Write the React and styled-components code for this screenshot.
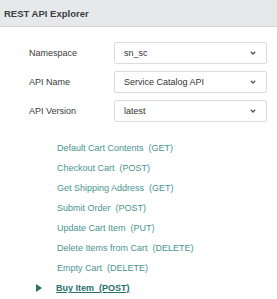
import React from 'react';
import styled, { createGlobalStyle } from 'styled-components';

const GlobalStyle = createGlobalStyle`
  html, body {
    margin: 0;
    padding: 0;
    background: #ffffff;
  }
  body {
    font-family: "Liberation Sans", Arial, sans-serif;
    font-size: 9px;
    color: #333333;
  }
`;

const Panel = styled.div`
  width: 277px;
  height: 299px;
  background: #ffffff;
  overflow: hidden;
`;

const Header = styled.div`
  height: 26px;
  display: flex;
  align-items: center;
  padding-left: 4px;
  background: #e6e8ea;
  border-bottom: 1px solid #d3d5d8;
  font-size: 9.5px;
  font-weight: bold;
  color: #3a3f44;
`;

const Form = styled.div`
  display: flex;
  flex-direction: column;
  gap: 7px;
  padding: 15px 10px 0 29px;
`;

const FormRow = styled.div`
  display: flex;
  align-items: center;
`;

const Label = styled.label`
  width: 85px;
  font-size: 9px;
  color: #3a3a3a;
`;

const SelectBox = styled.div`
  flex: 1;
  height: 20px;
  display: flex;
  align-items: center;
  justify-content: space-between;
  padding: 0 10px 0 9px;
  border: 1px solid #dcdcdc;
  border-radius: 2px;
  font-size: 9px;
  color: #333333;
`;

const Chevron = () => (
  <svg width="6" height="4" viewBox="0 0 6 4">
    <path d="M0.8 0.8 L3 3 L5.2 0.8" fill="none" stroke="#555" strokeWidth="1.3" />
  </svg>
);

const List = styled.ul`
  list-style: none;
  margin: 0;
  padding: 16px 0 0 0;
  display: flex;
  flex-direction: column;
`;

const Item = styled.li`
  height: 20px;
  display: flex;
  align-items: center;
  padding-left: ${p => (p.active ? 36 : 57)}px;
  gap: 14px;
`;

const ItemLink = styled.a`
  font-size: 9px;
  color: ${p => (p.active ? '#2a6e6a' : '#4a948f')};
  font-weight: ${p => (p.active ? 'bold' : 'normal')};
  text-decoration: ${p => (p.active ? 'underline' : 'none')};
  white-space: pre;
  cursor: pointer;
`;

const Arrow = styled.span`
  width: 0;
  height: 0;
  border-top: 4px solid transparent;
  border-bottom: 4px solid transparent;
  border-left: 6px solid #2a6e6a;
`;

const fields = [
  { label: 'Namespace', value: 'sn_sc' },
  { label: 'API Name', value: 'Service Catalog API' },
  { label: 'API Version', value: 'latest' },
];

const endpoints = [
  'Default Cart Contents  (GET)',
  'Checkout Cart  (POST)',
  'Get Shipping Address  (GET)',
  'Submit Order  (POST)',
  'Update Cart Item  (PUT)',
  'Delete Items from Cart  (DELETE)',
  'Empty Cart  (DELETE)',
  'Buy Item  (POST)',
];

export default function App() {
  const activeIndex = 7;
  return (
    <Panel>
      <GlobalStyle />
      <Header>REST API Explorer</Header>
      <Form>
        {fields.map(f => (
          <FormRow key={f.label}>
            <Label>{f.label}</Label>
            <SelectBox>
              <span>{f.value}</span>
              <Chevron />
            </SelectBox>
          </FormRow>
        ))}
      </Form>
      <List>
        {endpoints.map((e, i) => (
          <Item key={e} active={i === activeIndex}>
            {i === activeIndex && <Arrow />}
            <ItemLink active={i === activeIndex}>{e}</ItemLink>
          </Item>
        ))}
      </List>
    </Panel>
  );
}
